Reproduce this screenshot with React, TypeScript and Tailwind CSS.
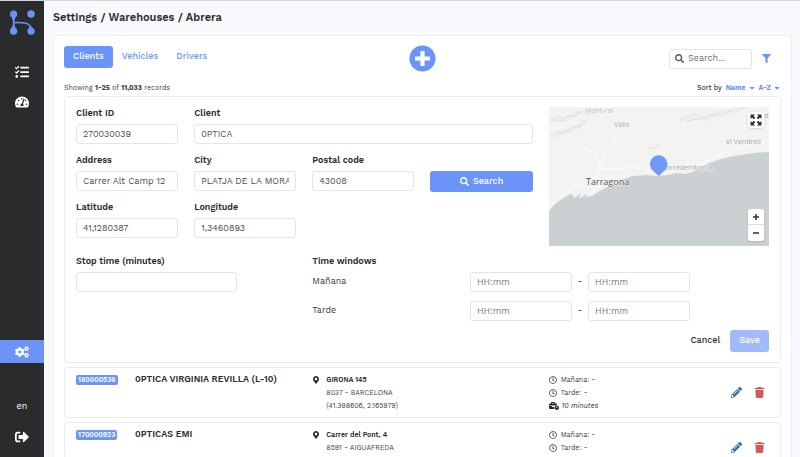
import React from "react";
import {
  FaBusinessTime,
  FaCaretDown,
  FaCogs,
  FaFilter,
  FaMapMarkerAlt,
  FaPencilAlt,
  FaPlusCircle,
  FaRegClock,
  FaSearch,
  FaSignOutAlt,
  FaTachometerAlt,
  FaTasks,
  FaTrash,
} from "react-icons/fa";

const inputClass =
  "block h-5 w-full min-w-0 rounded-[3px] border border-[#e4e5e7] bg-white px-1.5 text-[9px] text-[#494c50] placeholder:text-[#75787c] outline-none focus:border-[#6b93f8]";

const labelClass = "block text-[9px] leading-4 font-semibold text-[#2b2d30]";

type FieldProps = {
  id: string;
  label: string;
  value?: string;
  className: string;
};

const Field: React.FC<FieldProps> = ({ id, label, value, className }) => (
  <div className={className}>
    <label htmlFor={id} className={`${labelClass} mb-[3px]`}>
      {label}
    </label>
    <input id={id} type="text" defaultValue={value} className={inputClass} />
  </div>
);

const Logo: React.FC = () => (
  <svg viewBox="0 0 25 25" className="size-[25px] text-[#6b93f8]" fill="currentColor" aria-label="Home">
    <circle cx="3.600" cy="4" r="3.600" />
    <circle cx="21" cy="4" r="3.700" />
    <circle cx="3.600" cy="21.200" r="3.600" />
    <circle cx="21" cy="21.200" r="3.600" />
    <path d="M.8 6.200C2.400 8 2.900 10 2.900 12.600C2.900 15.200 2.400 17.200 .8 19L6.400 19C4.800 17.200 4.500 15.500 4.500 13.800L4.500 11.500C4.500 9.800 4.900 8 6.400 6.200Z" />
    <path
      d="M4 12.800C8 12.300 11 12.400 15 13C19 13.700 20.700 15.200 21 20"
      fill="none"
      stroke="currentColor"
      strokeWidth="1.600"
    />
    <path d="M18.300 18.800C19.900 17.600 20 16.500 19.500 15.300L20.900 15.500C21.500 17 22.200 18 23.700 18.800Z" />
  </svg>
);

const Sidebar: React.FC = () => (
  <nav className="flex w-11 shrink-0 flex-col items-stretch bg-[#2a2b2d] pt-[9px] pb-2 text-white">
    <a href="#" className="mb-[22px] flex justify-center">
      <Logo />
    </a>
    <a href="#tasks" aria-label="Tasks" className="flex h-[30px] items-center justify-center">
      <FaTasks className="size-3.5" />
    </a>
    <a href="#dashboard" aria-label="Dashboard" className="flex h-[30px] items-center justify-center">
      <FaTachometerAlt className="size-3.5" />
    </a>
    <a
      href="#settings"
      aria-label="Settings"
      className="mt-auto flex h-[23px] items-center justify-center bg-[#6b93f8]"
    >
      <FaCogs className="size-3.5" />
    </a>
    <button type="button" className="mt-[34px] h-5 text-[9px]">
      en
    </button>
    <button type="button" aria-label="Log out" className="mt-2 flex h-6 items-center justify-center">
      <FaSignOutAlt className="size-3.5" />
    </button>
  </nav>
);

const Map: React.FC = () => (
  <div className="relative h-[139px] w-full overflow-hidden bg-[#cbd1d2]">
    <svg
      viewBox="0 0 220 139"
      preserveAspectRatio="xMidYMid slice"
      className="h-full w-full"
      fontFamily="'Open Sans', sans-serif"
    >
      <path
        d="M0 0H220V45L205 46L185 49L172 52L160 56L150 61L143 65L136 67L128 66L118 68L108 69L98 68L84 69L75 72L64 77L52 83L43 89L36 90L39 86L30 92L32 86L26 91L22 87L13 92L6 97L0 104Z"
        fill="#f3f3f2"
      />
      <g fill="none" stroke="#ececec" strokeWidth="4">
        <path d="M0 14L9 10L16 13L28 5L40 7L50 1" />
        <path d="M0 29L10 27L20 24L30 19L37 14" />
        <path d="M130 14L145 8L156 12L170 5L186 4L196 0" />
      </g>
      <g fill="none" stroke="#dedfe0" strokeWidth="1">
        <path d="M4 13L12 14L19 9L25 10L32 4M6 25L17 25L24 20L33 18" />
        <path d="M137 14L150 12L160 8L171 9L183 3M99 41L104 42L110 38" />
      </g>
      <g fill="none" stroke="#fbfbfb" strokeWidth="1">
        <path d="M0 100L16 85L35 75L48 69L52 61L66 62L84 60L102 64L116 66" />
        <path d="M52 61L55 48L64 35L71 23L80 10M52 61L46 45L30 39M38 88L50 79L61 76" />
        <path d="M116 66L140 61L160 53L177 45L195 40L220 34M181 44L186 32L193 23" />
      </g>
      <g fontSize="7" fill="#a7a8a8" stroke="#f7f7f6" strokeWidth="1" paintOrder="stroke">
        <text x="36" y="6" fill="#bcbdbd">
          Mont-ral
        </text>
        <text x="65" y="20">Valls</text>
        <text x="177" y="37">el Vendrell</text>
        <text x="215" y="11">d</text>
        <text x="113" y="63">Torredembarra</text>
      </g>
      <text x="37" y="78" fontSize="9" fill="#555657" stroke="#f3f3f2" strokeWidth="1" paintOrder="stroke">
        Tarragona
      </text>
      <path
        d="M109.500 69L102.500 62.500A8.800 8.800 0 1 1 116.500 62.500Z"
        fill="#6f98f8"
      />
    </svg>
    <button
      type="button"
      aria-label="Full screen"
      className="absolute top-[5px] right-[5px] flex size-4 items-center justify-center rounded-[3px] bg-white text-[#303030] shadow"
    >
      <svg viewBox="0 0 12 12" className="size-3" fill="currentColor">
        <path d="M.5.500H5L3.500 2L5.300 3.800L3.800 5.300L2 3.500L.5 5ZM11.500.500V5L10 3.500L8.200 5.300L6.700 3.800L8.500 2L7 .500ZM.5 11.500V7L2 8.500L3.800 6.700L5.300 8.200L3.500 10L5 11.500ZM11.500 11.500H7L8.500 10L6.700 8.200L8.200 6.700L10 8.500L11.500 7Z" />
      </svg>
    </button>
    <div className="absolute right-[5px] bottom-[5px] flex w-4 flex-col divide-y divide-[#dddddd] rounded-[3px] bg-white text-[#303030] shadow">
      <button type="button" aria-label="Zoom in" className="flex h-4 items-center justify-center">
        <svg viewBox="0 0 8 8" className="size-2" fill="none" stroke="currentColor" strokeWidth="1.500">
          <path d="M4 1V7M1 4H7" />
        </svg>
      </button>
      <button type="button" aria-label="Zoom out" className="flex h-4 items-center justify-center">
        <svg viewBox="0 0 8 8" className="size-2" fill="none" stroke="currentColor" strokeWidth="1.500">
          <path d="M1 4H7" />
        </svg>
      </button>
    </div>
  </div>
);

const TimeWindow: React.FC<{ name: string }> = ({ name }) => (
  <div className="grid grid-cols-12 gap-x-4">
    <span className="col-span-4 text-[9px] leading-[18px] text-[#3d4043]">{name}</span>
    <div className="col-span-6 flex items-center">
      <input type="text" placeholder="HH:mm" aria-label={`${name} from`} className={inputClass} />
      <span className="w-4 shrink-0 text-center text-[9px]">-</span>
      <input type="text" placeholder="HH:mm" aria-label={`${name} to`} className={inputClass} />
    </div>
  </div>
);

const ClientForm: React.FC = () => (
  <form className="rounded-[3px] border border-[#ebecee] px-[11px] pt-2 pb-2.5">
    <div className="grid grid-cols-12 gap-x-4">
      <div className="col-span-8 grid grid-cols-8 content-start gap-x-4 gap-y-2">
        <Field id="client-id" label="Client ID" value="270030039" className="col-span-2" />
        <Field id="client" label="Client" value="0PTICA" className="col-span-6" />
        <Field id="address" label="Address" value="Carrer Alt Camp 12" className="col-span-2" />
        <Field id="city" label="City" value="PLATJA DE LA MORA" className="col-span-2" />
        <Field id="postal" label="Postal code" value="43008" className="col-span-2" />
        <button
          type="button"
          className="col-span-2 mt-[19px] -mb-px flex h-[21px] items-center justify-center gap-1 rounded-[3px] bg-[#6b93f8] text-[9px] font-medium text-white"
        >
          <FaSearch className="size-[9px]" />
          Search
        </button>
        <Field id="latitude" label="Latitude" value="41,1280387" className="col-span-2" />
        <Field id="longitude" label="Longitude" value="1,3460893" className="col-span-2" />
      </div>
      <div className="col-span-4 pt-[2px]">
        <Map />
      </div>
    </div>

    <div className="mt-[7px] grid grid-cols-12 gap-x-4">
      <Field id="stop-time" label="Stop time (minutes)" className="col-span-3" />
      <div className="col-span-8 col-start-5">
        <h3 className={`${labelClass} mb-[3px]`}>Time windows</h3>
        <div className="flex flex-col gap-[9px]">
          <TimeWindow name="Mañana" />
          <TimeWindow name="Tarde" />
        </div>
      </div>
    </div>

    <div className="mt-[9px] flex justify-end gap-2.5 text-[9px] font-medium">
      <button type="button" className="text-[#2b2d30]">
        Cancel
      </button>
      <button type="submit" disabled className="h-[22px] rounded-[3px] bg-[#a0bafb] px-[9px] text-white">
        Save
      </button>
    </div>
  </form>
);

type Client = {
  id: string;
  name: string;
  street: string;
  town: string;
  position?: string;
  stop?: string;
};

const clients: Client[] = [
  {
    id: "180000536",
    name: "0PTICA VIRGINIA REVILLA (L-10)",
    street: "GIRONA 145",
    town: "8037 - BARCELONA",
    position: "(41.398606, 2.165979)",
    stop: "10 minutes",
  },
  {
    id: "170000923",
    name: "0PTICAS EMI",
    street: "Carrer del Pont, 4",
    town: "8591 - AIGUAFREDA",
  },
];

const ClientRow: React.FC<{ client: Client }> = ({ client }) => (
  <li className="grid min-h-[50px] grid-cols-12 gap-x-4 rounded-[3px] border border-[#ebecee] px-[11px] py-[5px] text-[7px] text-[#3d4043]">
    <div className="col-span-1 flex items-start pt-0.5">
      <span className="rounded-xs bg-[#6b93f8] px-[2px] text-[7px] leading-[10px] font-semibold text-white">
        {client.id}
      </span>
    </div>
    <h2 className="col-span-3 text-[9px] leading-[13px] font-semibold whitespace-nowrap text-[#2b2d30]">
      {client.name}
    </h2>
    <div className="col-span-4 flex gap-1.5">
      <FaMapMarkerAlt className="mt-[3px] size-2 text-[#2b2d30]" />
      <div className="leading-[13px]">
        <p className="font-semibold text-[#2b2d30]">{client.street}</p>
        <p>{client.town}</p>
        <p>{client.position}</p>
      </div>
    </div>
    <div className="col-span-3 leading-[13px]">
      <p className="flex items-center gap-1">
        <FaRegClock className="size-2" /> Mañana: -
      </p>
      <p className="flex items-center gap-1">
        <FaRegClock className="size-2" /> Tarde: -
      </p>
      {client.stop && (
        <p className="flex items-center gap-[3px] text-[#2b2d30] italic">
          <FaBusinessTime className="size-2.5" /> {client.stop}
        </p>
      )}
    </div>
    <div className="flex items-center justify-end gap-3 pr-1">
      <button type="button" aria-label={`Edit ${client.name}`} className="text-[#3f6ea3]">
        <FaPencilAlt className="size-[11px]" />
      </button>
      <button type="button" aria-label={`Delete ${client.name}`} className="text-[#d05a55]">
        <FaTrash className="size-[11px]" />
      </button>
    </div>
  </li>
);

const SortSelect: React.FC<{ label: string; options: string[] }> = ({ label, options }) => (
  <span className="flex items-center gap-0.5 text-[#6b93f8]">
    <select aria-label={label} className="appearance-none bg-transparent font-bold [field-sizing:content]">
      {options.map((option) => (
        <option key={option}>{option}</option>
      ))}
    </select>
    <FaCaretDown className="size-2" />
  </span>
);

const App: React.FC = () => {
  return (
    <div className="flex h-screen overflow-hidden border-t border-[#d5d6d8] bg-[#f8f9fc] font-['Work_Sans',Inter,sans-serif] text-[#3d4043]">
      <Sidebar />
      <main className="flex min-w-0 flex-1 flex-col overflow-y-auto pr-2 pl-[9px] [scrollbar-width:none]">
        <h1 className="py-[9px] text-[11px] leading-4 font-semibold text-[#2b2d30]">
          Settings / Warehouses / Abrera
        </h1>

        <div className="flex-1 border border-[#eff0f3] bg-white px-2.5 pt-[9px] pb-3">
          {/* Toolbar */}
          <div className="grid grid-cols-[1fr_auto_1fr] items-center">
            <div className="flex items-center self-start pt-px text-[9px] font-medium text-[#6b93f8]">
              <button type="button" className="h-[22px] rounded-[3px] bg-[#6b93f8] px-[9px] text-white">
                Clients
              </button>
              <button type="button" className="h-[22px] px-[9px]">
                Vehicles
              </button>
              <button type="button" className="h-[22px] px-[9px]">
                Drivers
              </button>
            </div>
            <button type="button" aria-label="Add client" className="text-[#6b93f8]">
              <FaPlusCircle className="size-[27px]" />
            </button>
            <div className="flex items-center justify-end gap-2.5 pr-2.5">
              <label className="flex h-5 w-[83px] items-center gap-1 rounded-[3px] border border-[#e4e5e7] px-[5px]">
                <FaSearch className="size-[9px] shrink-0 text-[#54575b]" />
                <input
                  type="search"
                  placeholder="Search..."
                  aria-label="Search"
                  className="w-full min-w-0 text-[9px] outline-none placeholder:text-[#6a6d71]"
                />
              </label>
              <button type="button" aria-label="Filter" className="text-[#6b93f8]">
                <FaFilter className="size-[9px]" />
              </button>
            </div>
          </div>

          <div className="mt-2.5 mb-0.5 flex items-center justify-between text-[7px] leading-[12px]">
            <p>
              Showing <b className="font-bold">1-25</b> of <b className="font-bold">11,033</b> records
            </p>
            <div className="flex items-center gap-[3px] font-medium">
              <span className="pr-px">Sort by</span>
              <SortSelect label="Sort field" options={["Name"]} />
              <SortSelect label="Sort order" options={["A-Z", "Z-A"]} />
            </div>
          </div>

          <ClientForm />

          <ul className="mt-1 flex flex-col gap-1">
            {clients.map((client) => (
              <ClientRow key={client.id} client={client} />
            ))}
          </ul>
        </div>
      </main>
    </div>
  );
};

export default App;
